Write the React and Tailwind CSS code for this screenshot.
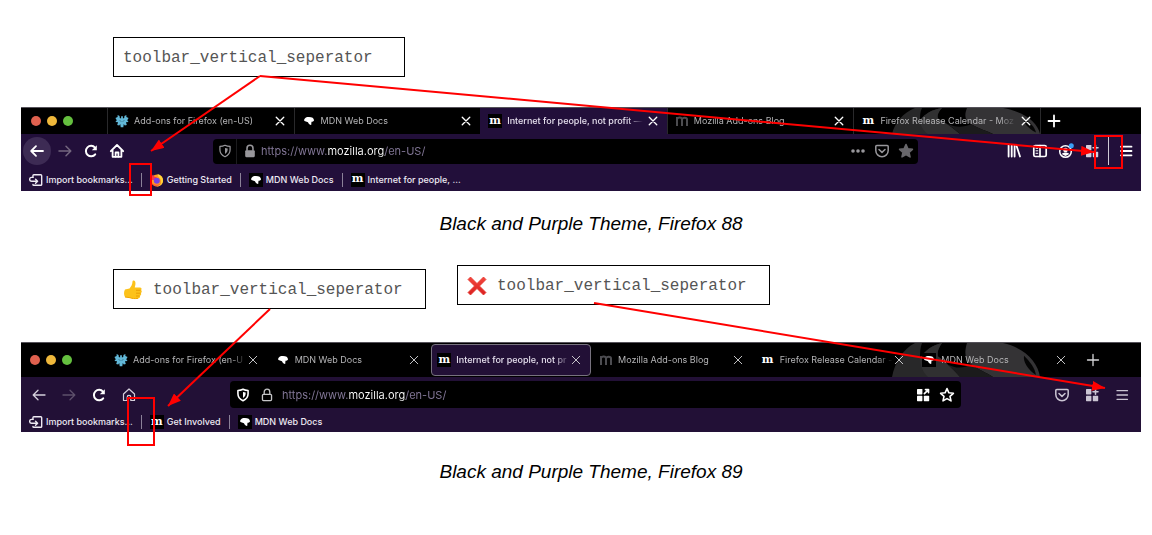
import React, { useState } from "react";

function Icon({ className = "size-4", children, width = 1.5 }) {
  return (
    <svg
      viewBox="0 0 16 16"
      className={`shrink-0 ${className}`}
      fill="none"
      stroke="currentColor"
      strokeWidth={width}
      strokeLinecap="round"
      strokeLinejoin="round"
      aria-hidden="true"
    >
      {children}
    </svg>
  );
}

const BackIcon = ({ width }) => (
  <Icon width={width}>
    <path d="M14 8H2.5M7 3.2L2.2 8L7 12.8" />
  </Icon>
);

const ForwardIcon = ({ width }) => (
  <Icon width={width}>
    <path d="M2 8h11.5M9 3.2L13.8 8L9 12.8" />
  </Icon>
);

const ReloadIcon = () => (
  <Icon width={2}>
    <path d="M12.2 11.3A5.2 5.2 0 1 1 12 4.6" />
    <path d="M13.8 2.2v5H8.8z" fill="currentColor" stroke="none" />
  </Icon>
);

const HomeSolidIcon = () => (
  <Icon width={1.8}>
    <path d="M1.8 8.2L8 2l6.2 6.2M3.6 7.5v6.3h8.8V7.5" />
    <path d="M6.6 13.5V9.5h2.8v4" />
  </Icon>
);

const HomeIcon = () => (
  <Icon width={1.2}>
    <path d="M2.5 7L8 2l5.5 5v6.5h-3.7v-3.3a1.8 1.8 0 0 0-3.6 0v3.3H2.5z" />
  </Icon>
);

const ShieldIcon = ({ bright }) => (
  <Icon width={bright ? 1.8 : 1.4} className="size-3.5">
    <path d="M8 1.5c2 1 4 1.300 5.800 1.300v3.900c0 3.600-2 6.300-5.800 7.900c-3.800-1.600-5.800-4.300-5.800-7.900V2.800c1.800 0 3.800-.3 5.800-1.300z" />
    <path d="M8 4.500v7c2-1.200 3-2.800 3-4.800V5.200z" fill="currentColor" stroke="none" />
  </Icon>
);

const LockSolidIcon = () => (
  <Icon width={1.8} className="size-3.5">
    <path d="M4.6 7V4.8a3.4 3.4 0 0 1 6.8 0V7" />
    <rect x="2.5" y="7" width="11" height="8" rx="1.3" fill="currentColor" stroke="none" />
  </Icon>
);

const LockIcon = () => (
  <Icon width={1.5} className="size-3.5">
    <path d="M4.8 7V4.5a3.2 3.2 0 0 1 6.4 0V7" />
    <rect x="2.8" y="7.2" width="10.4" height="7.2" rx="1.2" />
  </Icon>
);

const PocketIcon = () => (
  <Icon width={1.5}>
    <path d="M2.8 2.5h10.4a1 1 0 0 1 1 1v4a6.2 6.2 0 0 1-12.4 0v-4a1 1 0 0 1 1-1z" />
    <path d="M5 6.5L8 9.4l3-2.9" />
  </Icon>
);

const StarIcon = ({ filled }) => (
  <Icon width={1.6}>
    <path
      d="M8 1.6l1.9 4.2l4.5.5l-3.4 3l1 4.6L8 11.6l-4 2.3l1-4.6l-3.4-3l4.5-.5z"
      fill={filled ? "currentColor" : "none"}
    />
  </Icon>
);

const GridIcon = ({ arrow }) => (
  <Icon>
    <g fill="currentColor" stroke="none">
      <rect x="2" y="2" width="5.4" height="5.4" rx=".6" />
      <rect x="2" y="8.8" width="5.4" height="5.4" rx=".6" />
      <rect x="8.8" y="8.8" width="5.4" height="5.4" rx=".6" />
    </g>
    {arrow ? (
      <path d="M9.4 6.7L13.3 2.8M10.5 2.6h3v3" strokeWidth="1.7" />
    ) : (
      <path d="M11.5 2.2v5M9 4.7h5" strokeWidth="1.6" />
    )}
  </Icon>
);

const MenuIcon = ({ width }) => (
  <Icon width={width}>
    <path d="M3 3.7h10.500M3 8h10.500M3 12.300h10.500" />
  </Icon>
);

const LibraryIcon = () => (
  <Icon width={1.8}>
    <path d="M2.6 2.5v11M5.7 2.5v11M8.6 2.5v11M10.6 3l3.4 10.5" />
  </Icon>
);

const SidebarIcon = () => (
  <Icon width={1.7}>
    <rect x="1.8" y="2.5" width="12.4" height="11" rx="1.5" />
    <path d="M8 2.5v11" />
    <path d="M4 5.3h1.8M4 7.8h1.8M4 10.3h1.8" strokeWidth="1" />
  </Icon>
);

const AccountIcon = () => (
  <Icon width={1.5}>
    <circle cx="7.5" cy="8.5" r="5.8" />
    <circle cx="7.5" cy="7" r="2.3" fill="currentColor" stroke="none" />
    <path d="M3.8 11c1.5-2 6-2 7.4 0l-3.7 2z" fill="currentColor" stroke="none" />
    <circle cx="13.3" cy="2.7" r="2.5" fill="#3aa0f5" stroke="none" />
  </Icon>
);

const CloseIcon = ({ width }) => (
  <Icon width={width} className="size-3">
    <path d="M3 3l10 10M13 3L3 13" />
  </Icon>
);

const PlusIcon = ({ width }) => (
  <Icon width={width}>
    <path d="M8 2.5v11M2.5 8h11" />
  </Icon>
);

const ImportIcon = () => (
  <Icon width={1.6} className="size-3.5">
    <path d="M4.5 5V3a1 1 0 0 1 1-1h8a1 1 0 0 1 1 1v10a1 1 0 0 1-1 1h-8a1 1 0 0 1-1-1" />
    <path d="M4.5 5H3a1.8 1.8 0 0 0 0 4.5h6.5M7.500 7.200l2.300 2.300l-2.300 2.300" />
  </Icon>
);

const AddonsIcon = () => (
  <svg viewBox="0 0 16 16" className="size-3.5 shrink-0" fill="#62b8d8" aria-hidden="true">
    <path d="M3 1l2.200 1.200L5.500 4.500L7 5V2.500h2V5l1.500-.5l.3-2.300L13 1v2.500l2.500 1L14 7l1.500 2l-3 .5l1 3l-2.300.5L10 11.500L9.500 15h-3L6 11.500L4.800 13l-2.300-.5l1-3l-3-.5L2 7L.5 4.500l2.500-1z" />
    <path d="M5.800 7.500l1 1M10.200 7.500l-1 1" stroke="#0b2b38" strokeWidth="1" />
  </svg>
);

const MdnIcon = () => (
  <svg viewBox="0 0 14 14" className="size-3.5 shrink-0" aria-hidden="true">
    <rect width="14" height="14" fill="#000" />
    <path
      d="M2 6C3 3.500 4.500 3 7 3c3 0 5 1 5 3.500c-.3 1-1.500 1.200-2.500 1.200l-.3 3.300c-1.700-.3-2.800-1.500-3.200-2.800L2.500 7z"
      fill="#fff"
    />
  </svg>
);

const MozillaIcon = () => (
  <span
    aria-hidden="true"
    className="flex h-3.5 w-3.5 shrink-0 items-center justify-center bg-black pb-0.5 font-['DejaVu_Serif'] text-[11px] leading-none font-bold text-white"
  >
    m
  </span>
);

const BlogIcon = () => (
  <svg viewBox="0 0 14 14" className="size-3.5 shrink-0" fill="none" stroke="#4c4c50" strokeWidth="2" aria-hidden="true">
    <path d="M2 12V3M2 5c1-2 4.800-2 5 .500V12M7 5.500c.5-2.500 5-2.500 5 0V12" />
  </svg>
);

const FirefoxIcon = () => (
  <svg viewBox="0 0 14 14" className="size-3.5 shrink-0" aria-hidden="true">
    <circle cx="7" cy="7.500" r="6" fill="#ff9a1f" />
    <path d="M7.500 1c4 1 6 4 5.500 7.500c-.6 3-3.500 5-6.500 5c4-1 5-3 4.500-6c-.3-2-3-3-3.500-6.500z" fill="#ffd53a" />
    <path d="M1 7c0-3 1.500-5 2-5.500l1.500 2.200L7 4.500L5 7z" fill="#f4384a" />
    <circle cx="6.800" cy="7.800" r="3" fill="#7542e5" />
    <path d="M1.200 8c1.500 4 6 5 9.500 2.500c-1.500 3.500-8.500 4.500-9.500-2.500z" fill="#ff5a36" />
  </svg>
);

const favicons = {
  addons: AddonsIcon,
  mdn: MdnIcon,
  mozilla: MozillaIcon,
  blog: BlogIcon,
  firefox: FirefoxIcon,
  import: ImportIcon,
};

const Favicon = ({ name }) => {
  const Glyph = favicons[name];
  return <Glyph />;
};

// grey fox tail of the theme, lies behind the last tabs
function ThemeArt({ className }) {
  return (
    <svg
      viewBox="0 0 150 35"
      preserveAspectRatio="none"
      className={`pointer-events-none absolute top-0 ${className}`}
      aria-hidden="true"
    >
      <path d="M0 35C3 20 11 6 23 0h7c-2 5-2 11-2 16C33 8 40 2 50 0c-4 6-5 10-4 14c6 4 14 12 22 21z" fill="#282829" />
      <path d="M28 16C33 8 40 2 50 0c-4 6-5 10-4 14c6 4 14 12 22 21H36C30 29 28 22 28 16z" fill="#303031" />
      <path d="M75 0c-3 10-2 17 4 22c8 6 16 9 22 13h47C146 20 133 5 111 0z" fill="#343335" />
      <path d="M54 21c8 5 17 6 25 1c8 6 16 9 22 13H68C64 30 59 25 54 21z" fill="#1b1b1c" />
      <path d="M132 13c-1 7 4 14 12 20c-1-7-6-14-12-20z" fill="#050505" />
    </svg>
  );
}

function Lights({ className }) {
  return (
    <div className={`flex shrink-0 items-center gap-1.5 ${className}`}>
      <button aria-label="Close window" className="size-2.5 rounded-full bg-[#e0614f]" />
      <button aria-label="Minimize window" className="size-2.5 rounded-full bg-[#efb83b]" />
      <button aria-label="Zoom window" className="size-2.5 rounded-full bg-[#65c03f]" />
    </div>
  );
}

function UrlInput() {
  const [url, setUrl] = useState("https://www.mozilla.org/en-US/");
  return (
    <input
      type="text"
      aria-label="Address"
      value={url}
      onChange={(e) => setUrl(e.target.value)}
      className="h-5 min-w-0 flex-1 bg-[linear-gradient(90deg,#85799a_67px,#fff_67px,#fff_124px,#85799a_124px)] bg-clip-text text-[11px] text-transparent outline-none"
    />
  );
}

function Bookmarks({ items, className }) {
  return (
    <nav className={`flex items-center text-[9px] font-medium text-[#eeeaf3] ${className}`}>
      {items.map((item, i) => (
        <React.Fragment key={item.label}>
          {i > 0 && <span className="mx-2 h-3.5 w-px bg-[#8b8198]" />}
          <a href="#" className="flex items-center gap-[3px] whitespace-nowrap">
            <Favicon name={item.icon} />
            {item.label}
          </a>
        </React.Fragment>
      ))}
    </nav>
  );
}

const oldTabs = [
  { icon: "addons", label: "Add-ons for Firefox (en-US)" },
  { icon: "mdn", label: "MDN Web Docs" },
  { icon: "mozilla", label: "Internet for people, not profit —", active: true },
  { icon: "blog", label: "Mozilla Add-ons Blog" },
  { icon: "mozilla", label: "Firefox Release Calendar - Moz" },
];

const newTabs = [
  { icon: "addons", label: "Add-ons for Firefox (en-U" },
  { icon: "mdn", label: "MDN Web Docs" },
  { icon: "mozilla", label: "Internet for people, not pr", active: true },
  { icon: "blog", label: "Mozilla Add-ons Blog" },
  { icon: "mozilla", label: "Firefox Release Calendar -" },
  { icon: "mdn", label: "MDN Web Docs" },
];

const fade = "[mask-image:linear-gradient(90deg,#000_calc(100%-16px),transparent)]";

function Firefox88() {
  return (
    <section className="bg-[#220f3a] font-['Inter',sans-serif] text-white">
      <div className="relative flex h-[27px] border-t border-[#55525a] bg-black">
        <ThemeArt className="right-[99px] h-full w-[150px]" />
        <Lights className="w-[86px] pl-2.5" />
        {oldTabs.map((tab) => (
          <div
            key={tab.label}
            className={`relative flex min-w-0 flex-1 items-center border-l pr-2 pl-[7px] text-[9px] ${
              tab.active
                ? "border-[#220f3a] bg-[#220f3a] font-medium text-[#e6e0ee]"
                : "border-[#29292b] text-[#b4b4b6]"
            }`}
          >
            <Favicon name={tab.icon} />
            <span className={`ml-[5px] flex-1 overflow-hidden whitespace-nowrap ${fade}`}>
              {tab.label}
            </span>
            <button aria-label="Close tab" className="ml-1 text-white">
              <CloseIcon width={1.8} />
            </button>
          </div>
        ))}
        <div className="relative flex w-[101px] shrink-0 items-center border-l border-[#29292b] pl-[5px]">
          <button aria-label="New tab">
            <PlusIcon width={1.8} />
          </button>
        </div>
      </div>
      <div className="flex h-[34px] items-center pr-[7px]">
        <button
          aria-label="Back"
          className="ml-0.5 flex size-7 items-center justify-center rounded-full bg-[#3d2b54]"
        >
          <BackIcon width={1.8} />
        </button>
        <button aria-label="Forward" className="ml-1.5 text-[#74677f]">
          <ForwardIcon width={1.5} />
        </button>
        <button aria-label="Reload" className="ml-2.5">
          <ReloadIcon />
        </button>
        <button aria-label="Home" className="ml-2.5">
          <HomeSolidIcon />
        </button>
        <div className="ml-[88px] flex h-[25px] flex-1 items-center rounded bg-black pr-1 pl-[5px] text-[#98979b]">
          <ShieldIcon />
          <span className="mx-1 h-[25px] w-px bg-[#1c1c1e]" />
          <span className="mr-1 ml-0.5 flex">
            <LockSolidIcon />
          </span>
          <UrlInput />
          <button aria-label="Page actions" className="mr-2">
            <Icon>
              <g fill="currentColor" stroke="none">
                <circle cx="3" cy="8" r="1.8" />
                <circle cx="8" cy="8" r="1.8" />
                <circle cx="13" cy="8" r="1.8" />
              </g>
            </Icon>
          </button>
          <button aria-label="Save to Pocket" className="mr-2">
            <PocketIcon />
          </button>
          <button aria-label="Bookmark this page" className="text-[#68676b]">
            <StarIcon filled />
          </button>
        </div>
        <div className="ml-[88px] flex items-center gap-2.5">
          <button aria-label="Library">
            <LibraryIcon />
          </button>
          <button aria-label="Sidebars">
            <SidebarIcon />
          </button>
          <button aria-label="Account">
            <AccountIcon />
          </button>
          <button aria-label="Extensions" className="text-[#d5d0dc]">
            <GridIcon />
          </button>
        </div>
        <span className="mr-[9px] ml-2 h-7 w-px bg-[#cfcad6]" />
        <button aria-label="Menu">
          <MenuIcon width={1.8} />
        </button>
      </div>
      <Bookmarks
        className="h-[23px] pl-2"
        items={[
          { icon: "import", label: "Import bookmarks…" },
          { icon: "firefox", label: "Getting Started" },
          { icon: "mdn", label: "MDN Web Docs" },
          { icon: "mozilla", label: "Internet for people, …" },
        ]}
      />
    </section>
  );
}

function Firefox89() {
  return (
    <section className="bg-[#221036] font-['Inter',sans-serif] text-white">
      <div className="relative flex h-[35px] border-t border-[#55525a] bg-black">
        <ThemeArt className="right-[99px] h-full w-[150px]" />
        <Lights className="w-[87px] pl-[9px]" />
        {newTabs.map((tab, i) => (
          <div
            key={i}
            className={`relative my-px mr-0.5 flex min-w-0 flex-1 items-center rounded border pr-2 pl-[5px] text-[9px] ${
              tab.active
                ? "border-[#77727e] bg-[#221036] font-medium text-[#e6e0ee]"
                : "border-transparent text-[#b4b4b6]"
            }`}
          >
            <Favicon name={tab.icon} />
            <span className={`ml-[5px] flex-1 overflow-hidden whitespace-nowrap ${fade}`}>
              {tab.label}
            </span>
            <button aria-label="Close tab" className="text-[#d8d8da]">
              <CloseIcon width={1.2} />
            </button>
          </div>
        ))}
        <div className="relative flex w-[63px] shrink-0 items-center pl-[7px]">
          <button aria-label="New tab" className="text-[#d8d8da]">
            <PlusIcon width={1.3} />
          </button>
        </div>
      </div>
      <div className="flex h-[35px] items-center pr-[11px]">
        <button aria-label="Back" className="ml-2.5 text-[#d4cfdb]">
          <BackIcon width={1.3} />
        </button>
        <button aria-label="Forward" className="ml-3.5 text-[#5d506b]">
          <ForwardIcon width={1.3} />
        </button>
        <button aria-label="Reload" className="ml-3.5">
          <ReloadIcon />
        </button>
        <button aria-label="Home" className="ml-3.5 text-[#d4cfdb]">
          <HomeIcon />
        </button>
        <div className="ml-[93px] flex h-[27px] flex-1 items-center rounded bg-black px-1.5">
          <ShieldIcon bright />
          <span className="mr-2 ml-2.5 flex text-[#c5c5c7]">
            <LockIcon />
          </span>
          <UrlInput />
          <button aria-label="Install app" className="mr-2">
            <GridIcon arrow />
          </button>
          <button aria-label="Bookmark this page">
            <StarIcon />
          </button>
        </div>
        <div className="ml-[93px] flex items-center gap-3.5 text-[#cbc5d3]">
          <button aria-label="Save to Pocket">
            <PocketIcon />
          </button>
          <button aria-label="Extensions">
            <GridIcon />
          </button>
          <button aria-label="Menu">
            <MenuIcon width={1.3} />
          </button>
        </div>
      </div>
      <Bookmarks
        className="h-5 pl-2"
        items={[
          { icon: "import", label: "Import bookmarks…" },
          { icon: "mozilla", label: "Get Involved" },
          { icon: "mdn", label: "MDN Web Docs" },
        ]}
      />
    </section>
  );
}

function Label({ className, children }) {
  return (
    <div
      className={`flex h-10 items-center gap-2.5 border border-black bg-white pt-0.5 pl-[9px] font-['Liberation_Mono',monospace] text-base text-[#555] ${className}`}
    >
      {children}
      toolbar_vertical_seperator
    </div>
  );
}

function Caption({ className, children }) {
  return (
    <p
      className={`pl-5 text-center font-['Liberation_Sans',sans-serif] text-[19px] leading-7 text-black italic ${className}`}
    >
      {children}
    </p>
  );
}

const ThumbIcon = () => (
  <svg viewBox="0 0 20 20" className="size-5" role="img" aria-label="Supported">
    <path
      d="M2 9.500l4.500-1c1.500-2 3-4 3-7c0-1.500 2.600-1.200 2.900 1c.3 2-.4 3.500-.6 5h5c2 0 2.200 2 1.200 2.600c1.200.8 1 2.500-.2 2.900c.8 1 .4 2.400-.8 2.700c.5 1.500-.4 2.600-2 2.700c-3 .3-6 .3-8-.7L2 17c-1.300-2-1.300-5.500 0-7.500z"
      fill="#fcc21b"
    />
    <path d="M13 10.300h4.500M13 13.200h4.500M13 16h3.500" stroke="#e59600" strokeWidth=".8" fill="none" />
    <path d="M2 17l5 .7c2 1 5 1 8 .7" stroke="#f2a600" strokeWidth="1" fill="none" />
  </svg>
);

const CrossIcon = () => (
  <svg viewBox="0 0 20 20" className="size-5" role="img" aria-label="Not supported">
    <defs>
      <linearGradient id="cross" x1="0" y1="0" x2="0" y2="1">
        <stop offset="0" stopColor="#f4473d" />
        <stop offset="1" stopColor="#d91f1f" />
      </linearGradient>
    </defs>
    <path
      d="M3.500 1L10 7.500L16.500 1L19 3.500L12.500 10L19 16.500L16.500 19L10 12.500L3.500 19L1 16.500L7.500 10L1 3.500z"
      fill="url(#cross)"
      stroke="#e5332c"
      strokeWidth=".8"
      strokeLinejoin="round"
    />
  </svg>
);

// arrows and frames drawn over both windows
function Annotations() {
  return (
    <svg
      viewBox="0 0 1152 535"
      preserveAspectRatio="none"
      className="pointer-events-none absolute inset-0 h-full w-full"
      fill="none"
      stroke="#f00"
      strokeWidth="2"
      aria-hidden="true"
    >
      <defs>
        <marker
          id="head"
          viewBox="0 0 13 10"
          markerUnits="userSpaceOnUse"
          markerWidth="13"
          markerHeight="10"
          refX="13"
          refY="5"
          orient="auto"
        >
          <path d="M0 0L13 5L0 10z" fill="#f00" stroke="none" />
        </marker>
      </defs>
      <path d="M260 76L151 151" markerEnd="url(#head)" />
      <path d="M260 76L1094 152" markerEnd="url(#head)" />
      <path d="M270 309L168 406" markerEnd="url(#head)" />
      <path d="M594 303L1105 388" markerEnd="url(#head)" />
      <rect x="130" y="164" width="21" height="31" />
      <rect x="1095" y="136" width="27" height="32" />
      <rect x="128" y="398" width="26" height="47" />
    </svg>
  );
}

export default function App() {
  return (
    <main className="relative bg-white pt-[37px] pr-[11px] pb-[49px] pl-[21px]">
      <Label className="ml-[92px] w-[292px]" />
      <div className="mt-[30px]">
        <Firefox88 />
      </div>
      <Caption className="mt-[19px]">Black and Purple Theme, Firefox 88</Caption>
      <div className="mt-[27px] ml-[92px] flex items-start gap-[31px]">
        <Label className="mt-1 w-[313px]">
          <ThumbIcon />
        </Label>
        <Label className="w-[313px]">
          <CrossIcon />
        </Label>
      </div>
      <div className="mt-[33px]">
        <Firefox89 />
      </div>
      <Caption className="mt-[26px]">Black and Purple Theme, Firefox 89</Caption>
      <Annotations />
    </main>
  );
}
